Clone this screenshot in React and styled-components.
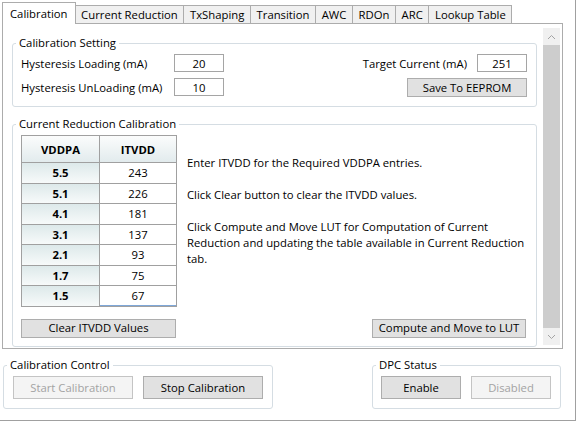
import React from "react";
import styled, { createGlobalStyle } from "styled-components";

const GlobalStyle = createGlobalStyle`
  html, body {
    margin: 0;
    padding: 0;
    background: #ffffff;
  }
  body {
    font-family: "Open Sans", "Noto Sans", sans-serif;
    font-size: 11.3px;
    color: #000000;
  }
`;

const tabs = [
  "Calibration",
  "Current Reduction",
  "TxShaping",
  "Transition",
  "AWC",
  "RDOn",
  "ARC",
  "Lookup Table",
];

const rows = [
  ["5.5", "243"],
  ["5.1", "226"],
  ["4.1", "181"],
  ["3.1", "137"],
  ["2.1", "93"],
  ["1.7", "75"],
  ["1.5", "67"],
];

const Chevron = ({ down }) => (
  <svg width="9" height="6" viewBox="0 0 9 6">
    <polyline
      points={down ? "1,1 4.5,4.5 8,1" : "1,5 4.5,1.5 8,5"}
      fill="none"
      stroke="#a3a3a3"
      strokeWidth="1"
    />
  </svg>
);

const App = () => {
  return (
    <>
      <GlobalStyle />
      <Frame>
        <TabStrip>
          {tabs.map((t, i) => (
            <Tab key={t} $active={i === 0} $first={i === 0}>
              {t}
            </Tab>
          ))}
        </TabStrip>
        <Page>
          <Content>
            <Group $width="525px">
              <Legend>Calibration Setting</Legend>
              <SettingsBody>
                <Column>
                  <Field>
                    <FieldLabel $width="153px">Hysteresis Loading (mA)</FieldLabel>
                    <NumberBox defaultValue="20" />
                  </Field>
                  <Field>
                    <FieldLabel $width="153px">Hysteresis UnLoading (mA)</FieldLabel>
                    <NumberBox defaultValue="10" />
                  </Field>
                </Column>
                <Column $align="flex-end">
                  <Field $gap="10px">
                    <FieldLabel>Target Current (mA)</FieldLabel>
                    <NumberBox defaultValue="251" />
                  </Field>
                  <Button $width="120px" $height="19px">Save To EEPROM</Button>
                </Column>
              </SettingsBody>
            </Group>

            <Group $width="525px" $top="9px">
              <Legend>Current Reduction Calibration</Legend>
              <ReductionBody>
                <Column>
                  <Grid>
                    <HeadCell>VDDPA</HeadCell>
                    <HeadCell>ITVDD</HeadCell>
                    {rows.map(([v, i], idx) => (
                      <React.Fragment key={v}>
                        <RowHead>{v}</RowHead>
                        <Cell $selected={idx === rows.length - 1}>{i}</Cell>
                      </React.Fragment>
                    ))}
                  </Grid>
                  <Button $width="155px" $height="19px" $top="6px">
                    Clear ITVDD Values
                  </Button>
                </Column>
                <Notes>
                  <Note>Enter ITVDD for the Required VDDPA entries.</Note>
                  <Note>Click Clear button to clear the ITVDD values.</Note>
                  <Note>
                    Click Compute and Move LUT for Computation of Current
                    <br />
                    Reduction and updating the table available in Current Reduction
                    <br />
                    tab.
                  </Note>
                  <Button $width="154px" $height="19px" $self="flex-end" $top="auto">
                    Compute and Move to LUT
                  </Button>
                </Notes>
              </ReductionBody>
            </Group>
          </Content>
          <ScrollBar>
            <ScrollArrow>
              <Chevron />
            </ScrollArrow>
            <Thumb />
            <ScrollArrow>
              <Chevron down />
            </ScrollArrow>
          </ScrollBar>
        </Page>

        <BottomRow>
          <Group $width="270px">
            <Legend>Calibration Control</Legend>
            <ButtonBody>
              <Button $width="120px" $height="23px" disabled>
                Start Calibration
              </Button>
              <Button $width="120px" $height="23px">Stop Calibration</Button>
            </ButtonBody>
          </Group>
          <Group $width="189px">
            <Legend>DPC Status</Legend>
            <ButtonBody $left="5px">
              <Button $width="80px" $height="23px">Enable</Button>
              <Button $width="80px" $height="23px" disabled>
                Disabled
              </Button>
            </ButtonBody>
          </Group>
        </BottomRow>
      </Frame>
    </>
  );
};

export default App;

const Frame = styled.div`
  box-sizing: border-box;
  width: 576px;
  height: 421px;
  padding-left: 2px;
  display: flex;
  flex-direction: column;
  background: #ffffff;
  border-right: 1px solid #a0a0a0;
  border-bottom: 1px solid #a0a0a0;
`;

const TabStrip = styled.div`
  position: relative;
  z-index: 1;
  height: 23px;
  display: flex;
  align-items: flex-end;
`;

const Tab = styled.div`
  position: relative;
  z-index: ${(p) => (p.$active ? 2 : 1)};
  box-sizing: border-box;
  height: ${(p) => (p.$active ? "22px" : "18px")};
  margin-bottom: ${(p) => (p.$active ? "-1px" : "0")};
  margin-left: ${(p) => (p.$first ? "0" : "-1px")};
  padding: ${(p) => (p.$active ? "0 7px 1px" : "0 5.6px")};
  display: flex;
  align-items: center;
  border: 1px solid #acacac;
  border-bottom: none;
  background: ${(p) => (p.$active ? "#ffffff" : "#f0f0f0")};
  white-space: nowrap;
`;

const Page = styled.div`
  box-sizing: border-box;
  width: 561px;
  height: 326px;
  display: flex;
  border: 1px solid #acacac;
  background: #ffffff;
`;

const Content = styled.div`
  flex: 1;
  padding: 11px 0 0 9px;
  overflow: hidden;
`;

const ScrollBar = styled.div`
  width: 17px;
  margin: 4px 2px 3px 0;
  display: flex;
  flex-direction: column;
  background: #f0f0f0;
`;

const ScrollArrow = styled.div`
  height: 17px;
  display: flex;
  align-items: center;
  justify-content: center;
`;

const Thumb = styled.div`
  flex: 1;
  background: #cdcdcd;
`;

const Group = styled.fieldset`
  box-sizing: border-box;
  width: ${(p) => p.$width};
  margin: ${(p) => p.$top || "0"} 0 0 0;
  padding: 0 0 0 3px;
  border: 1px solid #d5dde3;
  border-radius: 3px;
  min-width: 0;
`;

const Legend = styled.legend`
  padding: 0 3px;
  line-height: 16px;
  color: #000000;
`;

const SettingsBody = styled.div`
  display: flex;
  justify-content: space-between;
  padding: 3px 9px 9px 5px;
`;

const Column = styled.div`
  display: flex;
  flex-direction: column;
  align-items: ${(p) => p.$align || "flex-start"};
  gap: 6px;
`;

const Field = styled.div`
  display: flex;
  align-items: center;
  gap: ${(p) => p.$gap || "0"};
  height: 18px;
`;

const FieldLabel = styled.span`
  width: ${(p) => p.$width || "auto"};
  white-space: nowrap;
`;

const NumberBox = styled.input`
  box-sizing: border-box;
  width: 50px;
  height: 18px;
  padding: 0;
  border: 1px solid #a5a5a5;
  font: inherit;
  text-align: center;
  color: #000000;
  outline: none;
`;

const Button = styled.button`
  box-sizing: border-box;
  width: ${(p) => p.$width};
  height: ${(p) => p.$height};
  margin-top: ${(p) => p.$top || "0"};
  align-self: ${(p) => p.$self || "auto"};
  padding: 0;
  border: 1px solid ${(p) => (p.disabled ? "#c4c4c4" : "#adadad")};
  background: ${(p) => (p.disabled ? "#f4f4f4" : "#e1e1e1")};
  color: ${(p) => (p.disabled ? "#a3a3a3" : "#000000")};
  font: inherit;
  line-height: 1;
`;

const ReductionBody = styled.div`
  display: flex;
  gap: 10px;
  padding: 3px 10px 8px 5px;
`;

const Grid = styled.div`
  display: grid;
  grid-template-columns: 77px 76px;
  grid-template-rows: 26px repeat(7, 19.5px);
  gap: 1px;
  border: 1px solid #a0a0a0;
  background: #a0a0a0;
`;

const HeadCell = styled.div`
  display: flex;
  align-items: center;
  justify-content: center;
  font-weight: 700;
  background: linear-gradient(#fbfcfc, #e2ebed);
`;

const RowHead = styled.div`
  display: flex;
  align-items: center;
  justify-content: center;
  font-weight: 700;
  background: linear-gradient(#dde9ea, #f7fafa);
`;

const Cell = styled.div`
  display: flex;
  align-items: center;
  justify-content: center;
  background: #ffffff;
  box-shadow: ${(p) => (p.$selected ? "inset 0 -1px 0 #7ea7d8" : "none")};
`;

const Notes = styled.div`
  flex: 1;
  display: flex;
  flex-direction: column;
  align-items: flex-start;
  padding-top: 20px;
`;

const Note = styled.p`
  margin: 0 0 16px;
  line-height: 16px;
  white-space: nowrap;
`;

const BottomRow = styled.div`
  display: flex;
  justify-content: space-between;
  margin: 8px 14px 0 1px;
`;

const ButtonBody = styled.div`
  display: flex;
  gap: 10px;
  padding: 3px 0 9px ${(p) => p.$left || "6px"};
`;
